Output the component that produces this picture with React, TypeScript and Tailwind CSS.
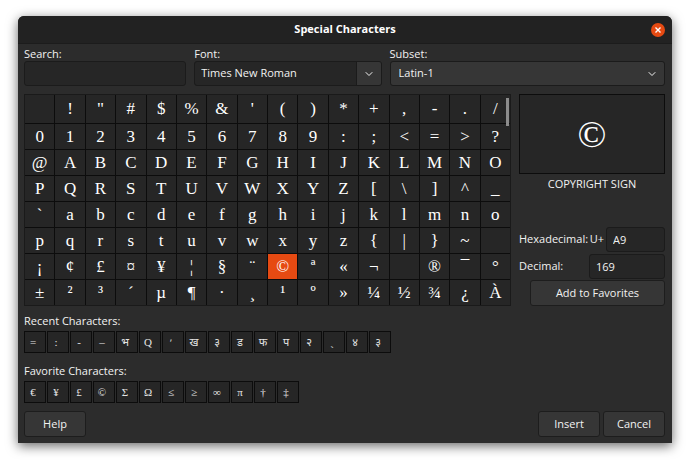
import { useState } from "react";
import { ChevronDown } from "lucide-react";

const range = (from: number, to: number) =>
  Array.from({ length: to - from + 1 }, (_, i) => from + i);

// Basic Latin, then Latin-1 without the control block
const CODES = [...range(0x20, 0x7e), ...range(0xa0, 0xc0)];

// Space, no-break space and soft hyphen leave their cell empty
const BLANK = [0x20, 0xa0, 0xad];

const RECENT = ["=", ":", "-", "–", "भ", "Q", "ʹ", "ख", "३", "ड", "फ", "प", "२", "ˏ", "४", "३"];
const FAVORITES = ["€", "¥", "£", "©", "Σ", "Ω", "≤", "≥", "∞", "π", "†", "‡"];

const fieldClass =
  "h-[25px] w-full rounded-[3px] border border-[#1b1b1b] bg-[#262626] px-1.5 text-[11px] text-[#f2f2f2] outline-none";
const buttonClass =
  "h-[26px] rounded-[3px] border border-[#1d1d1d] bg-[#363636] text-center text-[11px] text-[#f2f2f2] hover:bg-[#3e3e3e]";

interface CharStripProps {
  title: string;
  chars: string[];
}

function CharStrip({ title, chars }: CharStripProps) {
  return (
    <section>
      <h2 className="text-[11px] leading-4">{title}</h2>
      <div className="mt-0.5 flex gap-px">
        {chars.map((char, i) => (
          <button
            key={i}
            type="button"
            className="h-[22px] w-[22px] border border-[#0c0c0c] bg-[#262626] pr-1 text-center font-['Liberation_Serif','Noto_Sans',serif] text-[11px] leading-5 text-[#e4e4e4]"
          >
            {char}
          </button>
        ))}
      </div>
    </section>
  );
}

export default function App() {
  const [selected, setSelected] = useState(0xa9);

  return (
    <div className="min-h-screen bg-white px-[18px] pt-4 pb-5 font-['Open_Sans',sans-serif] text-[11px] text-[#f2f2f2]">
      <main className="overflow-hidden rounded-t-md bg-[#2c2c2c] shadow-[0_3px_12px_rgba(0,0,0,0.6)]">
        <header className="grid h-7 grid-cols-[1fr_auto_1fr] items-center border-b border-[#1c1c1c] bg-[#222222] px-[7px]">
          <h1 className="col-start-2 text-[11px] font-bold text-white">Special Characters</h1>
          <button
            type="button"
            aria-label="Close"
            className="flex h-3.5 w-3.5 items-center justify-center justify-self-end rounded-full bg-[#e64a12] text-white"
          >
            <svg viewBox="0 0 14 14" fill="none" stroke="currentColor" strokeWidth="1.4" className="h-3.5 w-3.5" aria-hidden>
              <path d="M4.5 4.5l5 5M9.5 4.5l-5 5" />
            </svg>
          </button>
        </header>

        <div className="pt-[3px] pr-[7px] pb-1.5 pl-1.5">
          <div className="grid grid-cols-[162fr_187fr_275fr] gap-2">
            <div>
              <label htmlFor="search" className="block leading-[14px]">Search:</label>
              <input id="search" type="text" className={`${fieldClass} block`} />
            </div>
            <div>
              <label htmlFor="font" className="block leading-[14px]">Font:</label>
              <div className="relative">
                <select id="font" className={`${fieldClass} block appearance-none pr-7`}>
                  <option>Times New Roman</option>
                </select>
                <span className="pointer-events-none absolute inset-y-px right-px flex w-[25px] items-center justify-center rounded-r-[2px] border-l border-[#1b1b1b] bg-[#363636]">
                  <ChevronDown className="h-3 w-3" aria-hidden />
                </span>
              </div>
            </div>
            <div>
              <label htmlFor="subset" className="block leading-[14px]">Subset:</label>
              <div className="relative">
                <select
                  id="subset"
                  className="block h-[25px] w-full appearance-none rounded-[3px] border border-[#1b1b1b] bg-[#363636] px-2 text-[11px] text-[#f2f2f2] outline-none"
                >
                  <option>Latin-1</option>
                </select>
                <span className="pointer-events-none absolute inset-y-px right-px flex w-[25px] items-center justify-center">
                  <ChevronDown className="h-3 w-3" aria-hidden />
                </span>
              </div>
            </div>
          </div>

          <div className="mt-2 flex gap-2">
            <div className="relative min-w-0 flex-1">
              <div className="grid auto-rows-[25px] grid-cols-[repeat(16,minmax(0,1fr))] grid-rows-[28px] gap-px border border-[#1a1a1a] bg-[#0c0c0c]">
                {CODES.map((code) => (
                  <button
                    key={code}
                    type="button"
                    aria-label={`U+${code.toString(16).toUpperCase()}`}
                    onClick={() => setSelected(code)}
                    className={`text-center font-['Liberation_Serif',serif] text-[17px] leading-6 text-white ${
                      code === selected ? "bg-[#e64a12]" : "bg-[#262626]"
                    }`}
                  >
                    {BLANK.includes(code) ? null : String.fromCharCode(code)}
                  </button>
                ))}
              </div>
              <span className="absolute top-1 right-0.5 h-7 w-[3px] bg-[#8c8c8c]" />
            </div>

            <aside className="flex w-[146px] flex-col">
              <div className="flex h-20 items-center justify-center border border-[#0c0c0c] bg-[#262626] font-['Liberation_Serif',serif] text-[38px] leading-none text-white">
                {String.fromCharCode(selected)}
              </div>
              <p className="mt-0.5 text-center leading-4">COPYRIGHT SIGN</p>
              <div className="mt-auto flex items-center">
                <label htmlFor="hex" className="flex flex-1 justify-between pr-0.5 whitespace-nowrap">
                  <span>Hexadecimal:</span>
                  <span>U+</span>
                </label>
                <div className="w-[59px]">
                  <input id="hex" type="text" defaultValue="A9" className={`${fieldClass} block`} />
                </div>
              </div>
              <div className="mt-0.5 flex items-center justify-between">
                <label htmlFor="dec">Decimal:</label>
                <div className="w-[76px]">
                  <input id="dec" type="text" defaultValue="169" className={`${fieldClass} block`} />
                </div>
              </div>
              <button type="button" className={`${buttonClass} mt-px w-[135px] self-end`}>
                Add to Favorites
              </button>
            </aside>
          </div>

          <div className="mt-[7px] flex flex-col gap-2.5">
            <CharStrip title="Recent Characters:" chars={RECENT} />
            <CharStrip title="Favorite Characters:" chars={FAVORITES} />
          </div>

          <footer className="mt-2 flex gap-[3px]">
            <button type="button" className={`${buttonClass} mr-auto w-[62px]`}>Help</button>
            <button type="button" className={`${buttonClass} w-[62px]`}>Insert</button>
            <button type="button" className={`${buttonClass} w-[62px]`}>Cancel</button>
          </footer>
        </div>
      </main>
    </div>
  );
}
